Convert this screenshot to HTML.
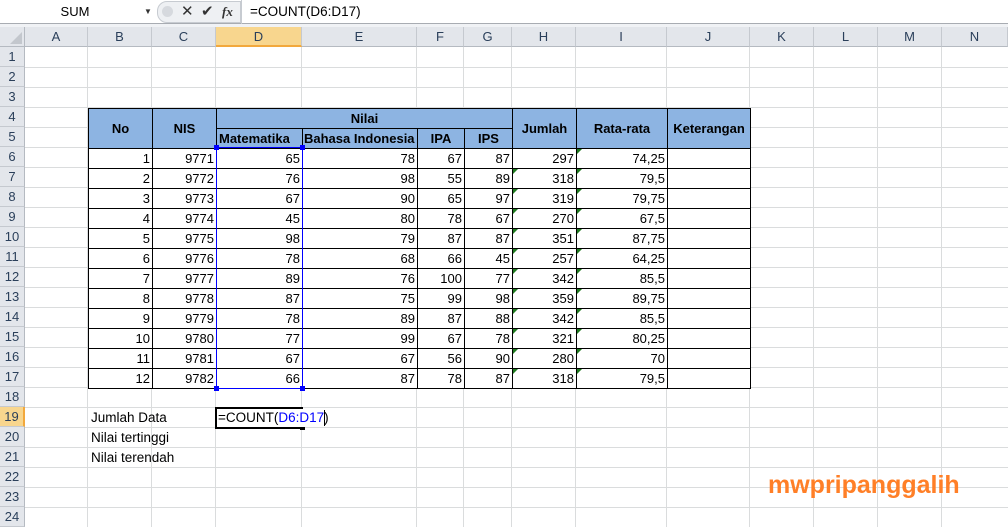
<!DOCTYPE html>
<html><head><meta charset="utf-8"><style>
*{margin:0;padding:0;box-sizing:border-box}
body{width:1008px;height:527px;overflow:hidden;background:#fff;font-family:"Liberation Sans",sans-serif;font-size:13px;position:relative;color:#000}
.a{position:absolute}
.vl{position:absolute;top:47px;height:480px;width:1px;background:#dadcdd}
.hl{position:absolute;left:25px;width:983px;height:1px;background:#dadcdd}
.ch{position:absolute;top:27px;height:20px;line-height:20px;text-align:center;color:#2a3f5a;border-right:1px solid #c5c9cf;border-bottom:1px solid #b5bac1;background:#e3e6eb}
.rh{position:absolute;left:0;width:25px;height:20px;line-height:20px;text-align:center;color:#2a3f5a;background:#e3e6eb;border-bottom:1px solid #c5c9cf;border-right:1px solid #b5bac1}
table{position:absolute;left:88px;top:108px;border-collapse:collapse;table-layout:fixed}
td{border:1px solid #000;height:20px;padding:0 2px;text-align:right;font-size:13px;line-height:18px;background:#fff;position:relative;white-space:nowrap;overflow:hidden}
td.h{background:#8db4e2;text-align:center;font-weight:bold}
.g:before{content:"";position:absolute;left:0;top:0;border-top:5px solid #1e7a1e;border-right:5px solid transparent}
.sq{position:absolute;width:5px;height:5px;background:#0000ff}
</style></head><body>
<div class="a" style="left:0;top:0;width:1008px;height:24px;background:#fff;border-bottom:1px solid #a8acb2"></div>
<div class="a" style="left:0;top:24px;width:1008px;height:3px;background:#f0f2f5"></div>
<div class="a" style="left:0;top:4px;width:150px;text-align:center;line-height:16px">SUM</div>
<div class="a" style="left:144px;top:4px;font-size:8px;line-height:16px;color:#333">▼</div>
<div class="a" style="left:157px;top:1px;width:84px;height:22px;background:#eef0f3;border-radius:10px 0 0 10px;border:1px solid #c7cbd1"></div>
<div class="a" style="left:162px;top:6px;width:11px;height:11px;border-radius:50%;background:#d6d9de"></div>
<div class="a" style="left:181px;top:3px;font-size:15px;color:#333;line-height:18px">✕</div>
<div class="a" style="left:201px;top:3px;font-size:15px;color:#333;line-height:18px">✔</div>
<div class="a" style="left:222px;top:3px;font-size:13px;font-style:italic;font-family:'Liberation Serif',serif;font-weight:bold;color:#333;line-height:18px">fx</div>
<div class="a" style="left:241px;top:0;width:1px;height:24px;background:#c7cbd1"></div>
<div class="a" style="left:250px;top:4px;line-height:16px;font-size:13.5px">=COUNT(D6:D17)</div>

<div class="a" style="left:0;top:27px;width:25px;height:20px;background:#e3e6eb;border-right:1px solid #b5bac1;border-bottom:1px solid #b5bac1"></div>
<div class="a" style="left:10px;top:32px;border-bottom:12px solid #c3c7cd;border-left:12px solid transparent"></div>
<div class="ch" style="left:25px;width:63px">A</div>
<div class="ch" style="left:88px;width:64px">B</div>
<div class="ch" style="left:152px;width:64px">C</div>
<div class="ch" style="left:216px;width:86px;background:#f8d68e;border-bottom:2px solid #f2a83c">D</div>
<div class="ch" style="left:302px;width:115px">E</div>
<div class="ch" style="left:417px;width:47px">F</div>
<div class="ch" style="left:464px;width:48px">G</div>
<div class="ch" style="left:512px;width:64px">H</div>
<div class="ch" style="left:576px;width:91px">I</div>
<div class="ch" style="left:667px;width:83px">J</div>
<div class="ch" style="left:750px;width:64px">K</div>
<div class="ch" style="left:814px;width:64px">L</div>
<div class="ch" style="left:878px;width:64px">M</div>
<div class="ch" style="left:942px;width:66px">N</div>

<div class="vl" style="left:87px"></div><div class="vl" style="left:151px"></div><div class="vl" style="left:215px"></div><div class="vl" style="left:301px"></div><div class="vl" style="left:416px"></div><div class="vl" style="left:463px"></div><div class="vl" style="left:511px"></div><div class="vl" style="left:575px"></div><div class="vl" style="left:666px"></div><div class="vl" style="left:749px"></div><div class="vl" style="left:813px"></div><div class="vl" style="left:877px"></div><div class="vl" style="left:941px"></div>
<div class="hl" style="top:67px"></div><div class="hl" style="top:87px"></div><div class="hl" style="top:107px"></div><div class="hl" style="top:127px"></div><div class="hl" style="top:147px"></div><div class="hl" style="top:167px"></div><div class="hl" style="top:187px"></div><div class="hl" style="top:207px"></div><div class="hl" style="top:227px"></div><div class="hl" style="top:247px"></div><div class="hl" style="top:267px"></div><div class="hl" style="top:287px"></div><div class="hl" style="top:307px"></div><div class="hl" style="top:327px"></div><div class="hl" style="top:347px"></div><div class="hl" style="top:367px"></div><div class="hl" style="top:387px"></div><div class="hl" style="top:407px"></div><div class="hl" style="top:427px"></div><div class="hl" style="top:447px"></div><div class="hl" style="top:467px"></div><div class="hl" style="top:487px"></div><div class="hl" style="top:507px"></div>

<div class="rh" style="top:47px">1</div><div class="rh" style="top:67px">2</div><div class="rh" style="top:87px">3</div><div class="rh" style="top:107px">4</div><div class="rh" style="top:127px">5</div><div class="rh" style="top:147px">6</div><div class="rh" style="top:167px">7</div><div class="rh" style="top:187px">8</div><div class="rh" style="top:207px">9</div><div class="rh" style="top:227px">10</div><div class="rh" style="top:247px">11</div><div class="rh" style="top:267px">12</div><div class="rh" style="top:287px">13</div><div class="rh" style="top:307px">14</div><div class="rh" style="top:327px">15</div><div class="rh" style="top:347px">16</div><div class="rh" style="top:367px">17</div><div class="rh" style="top:387px">18</div><div class="rh" style="top:407px;background:#f8d68e;border-right:2px solid #f2a83c">19</div><div class="rh" style="top:427px">20</div><div class="rh" style="top:447px">21</div><div class="rh" style="top:467px">22</div><div class="rh" style="top:487px">23</div><div class="rh" style="top:507px">24</div>

<table>
<colgroup><col style="width:64px"><col style="width:64px"><col style="width:86px"><col style="width:115px"><col style="width:47px"><col style="width:48px"><col style="width:64px"><col style="width:91px"><col style="width:83px"></colgroup>
<tr><td class="h" rowspan="2">No</td><td class="h" rowspan="2">NIS</td><td class="h" colspan="4">Nilai</td><td class="h" rowspan="2">Jumlah</td><td class="h" rowspan="2">Rata-rata</td><td class="h" rowspan="2">Keterangan</td></tr>
<tr><td class="h" style="text-align:left">Matematika</td><td class="h" style="text-align:left;padding-left:1px">Bahasa Indonesia</td><td class="h">IPA</td><td class="h">IPS</td></tr>
<tr><td>1</td><td>9771</td><td>65</td><td>78</td><td>67</td><td>87</td><td>297</td><td class="g">74,25</td><td></td></tr>
<tr><td>2</td><td>9772</td><td>76</td><td>98</td><td>55</td><td>89</td><td class="g">318</td><td class="g">79,5</td><td></td></tr>
<tr><td>3</td><td>9773</td><td>67</td><td>90</td><td>65</td><td>97</td><td class="g">319</td><td class="g">79,75</td><td></td></tr>
<tr><td>4</td><td>9774</td><td>45</td><td>80</td><td>78</td><td>67</td><td class="g">270</td><td class="g">67,5</td><td></td></tr>
<tr><td>5</td><td>9775</td><td>98</td><td>79</td><td>87</td><td>87</td><td class="g">351</td><td class="g">87,75</td><td></td></tr>
<tr><td>6</td><td>9776</td><td>78</td><td>68</td><td>66</td><td>45</td><td class="g">257</td><td class="g">64,25</td><td></td></tr>
<tr><td>7</td><td>9777</td><td>89</td><td>76</td><td>100</td><td>77</td><td class="g">342</td><td class="g">85,5</td><td></td></tr>
<tr><td>8</td><td>9778</td><td>87</td><td>75</td><td>99</td><td>98</td><td class="g">359</td><td class="g">89,75</td><td></td></tr>
<tr><td>9</td><td>9779</td><td>78</td><td>89</td><td>87</td><td>88</td><td class="g">342</td><td class="g">85,5</td><td></td></tr>
<tr><td>10</td><td>9780</td><td>77</td><td>99</td><td>67</td><td>78</td><td class="g">321</td><td class="g">80,25</td><td></td></tr>
<tr><td>11</td><td>9781</td><td>67</td><td>67</td><td>56</td><td>90</td><td class="g">280</td><td class="g">70</td><td></td></tr>
<tr><td>12</td><td>9782</td><td>66</td><td>87</td><td>78</td><td>87</td><td class="g">318</td><td class="g">79,5</td><td></td></tr>
</table>

<div class="a" style="left:216px;top:147px;width:87px;height:242px;border:1px solid #0000ff"></div>
<div class="sq" style="left:214px;top:145px"></div><div class="sq" style="left:300px;top:145px"></div>
<div class="sq" style="left:214px;top:386px"></div><div class="sq" style="left:300px;top:386px"></div>

<div class="a" style="left:91px;top:409px;line-height:18px;font-size:13.5px">Jumlah Data</div>
<div class="a" style="left:91px;top:429px;line-height:18px;font-size:13.5px">Nilai tertinggi</div>
<div class="a" style="left:91px;top:449px;line-height:18px;font-size:13.5px">Nilai terendah</div>

<div class="a" style="left:215px;top:407px;width:88px;height:22px;border:2px solid #000;background:#fff"></div>
<div class="a" style="left:300px;top:426px;width:5px;height:4px;background:#000"></div>
<div class="a" style="left:218px;top:409px;line-height:18px;background:#fff;padding-right:2px;font-size:13.5px">=COUNT(<span style="color:#0000ff">D6:D17</span>)</div>
<div class="a" style="left:324px;top:410px;width:1px;height:16px;background:#000"></div>

<div class="a" style="left:768px;top:471px;font-size:25px;font-weight:bold;color:#ff7f27;line-height:28px">mwpripanggalih</div>
</body></html>
